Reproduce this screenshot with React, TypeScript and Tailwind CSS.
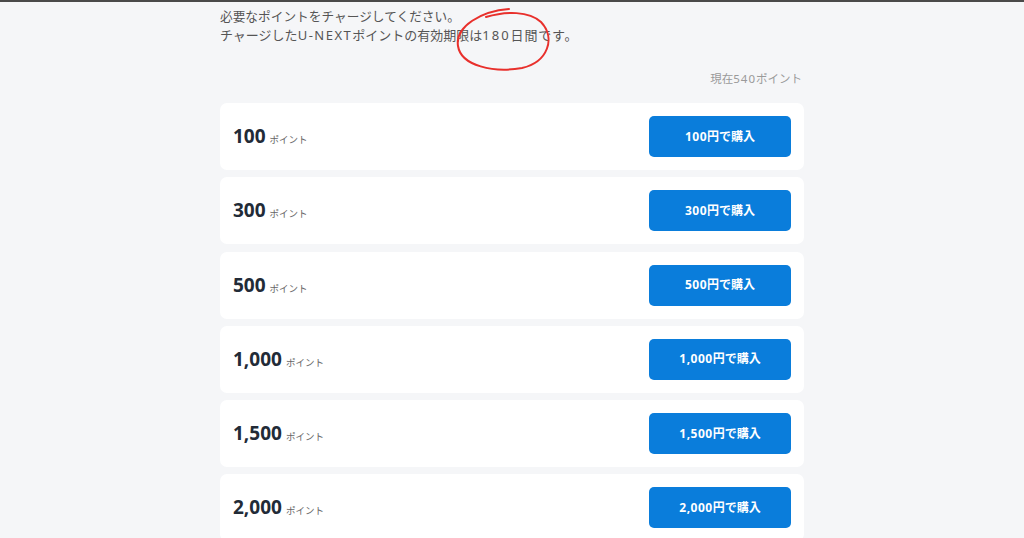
const plans = [
  { points: '100', price: '100' },
  { points: '300', price: '300' },
  { points: '500', price: '500' },
  { points: '1,000', price: '1,000' },
  { points: '1,500', price: '1,500' },
  { points: '2,000', price: '2,000' },
];

function PlanCard({ points, price }: { points: string; price: string }) {
  return (
    <div className="flex h-[67px] items-center justify-between rounded-[7px] bg-white pl-[13px] pr-[13px]">
      <div className="flex items-baseline gap-[4px]">
        <span className="text-[19px] font-bold leading-none text-[#222b37]">{points}</span>
        <span className="text-[9.5px] leading-none text-[#666]">ポイント</span>
      </div>
      <button className="flex h-[41px] w-[142px] items-center justify-center rounded-[5px] bg-[#0a7ddb] text-[12px] font-bold text-white">
        <span className="tracking-[0.5px]">{price}</span>円で購入
      </button>
    </div>
  );
}

export default function App() {
  return (
    <div
      className="relative h-[538px] w-full overflow-hidden border-t-2 border-[#4a4a4a] bg-[#f5f6f8]"
      style={{ fontFamily: '"Noto Sans", "Noto Sans CJK JP", sans-serif' }}
    >
      <div className="mx-auto w-[584px] pt-[5px]">
        <div className="leading-[19px] text-[#555]">
          <p className="text-[12.7px]">必要なポイントをチャージしてください。</p>
          <p className="text-[13px]">
            チャージした<span className="tracking-[1.5px]">U-NEXT</span>ポイントの有効期限は
            <span className="tracking-[2px]">180</span>
            <span className="tracking-[0.8px]">日間です。</span>
          </p>
        </div>

        <div className="mt-[26px] pr-[2px] text-right text-[11.5px] leading-[16px] text-[#9a9a9a]">
          現在<span className="tracking-[1px]">540</span>ポイント
        </div>

        <div className="mt-[16px] flex flex-col gap-[7.3px]">
          {plans.map((p) => (
            <PlanCard key={p.points} points={p.points} price={p.price} />
          ))}
        </div>
      </div>

      {/* hand-drawn annotation */}
      <svg
        className="pointer-events-none absolute left-0 top-0"
        width="1024"
        height="100"
        viewBox="0 0 1024 100"
        fill="none"
      >
        <path
          d="M509 7 C482 9 455 24 458 44 C461 64 494 71 522 66 C548 60 556 36 541 20 C529 9 506 9 486 15"
          stroke="#e8302c"
          strokeWidth="2"
          strokeLinecap="round"
        />
      </svg>
    </div>
  );
}
